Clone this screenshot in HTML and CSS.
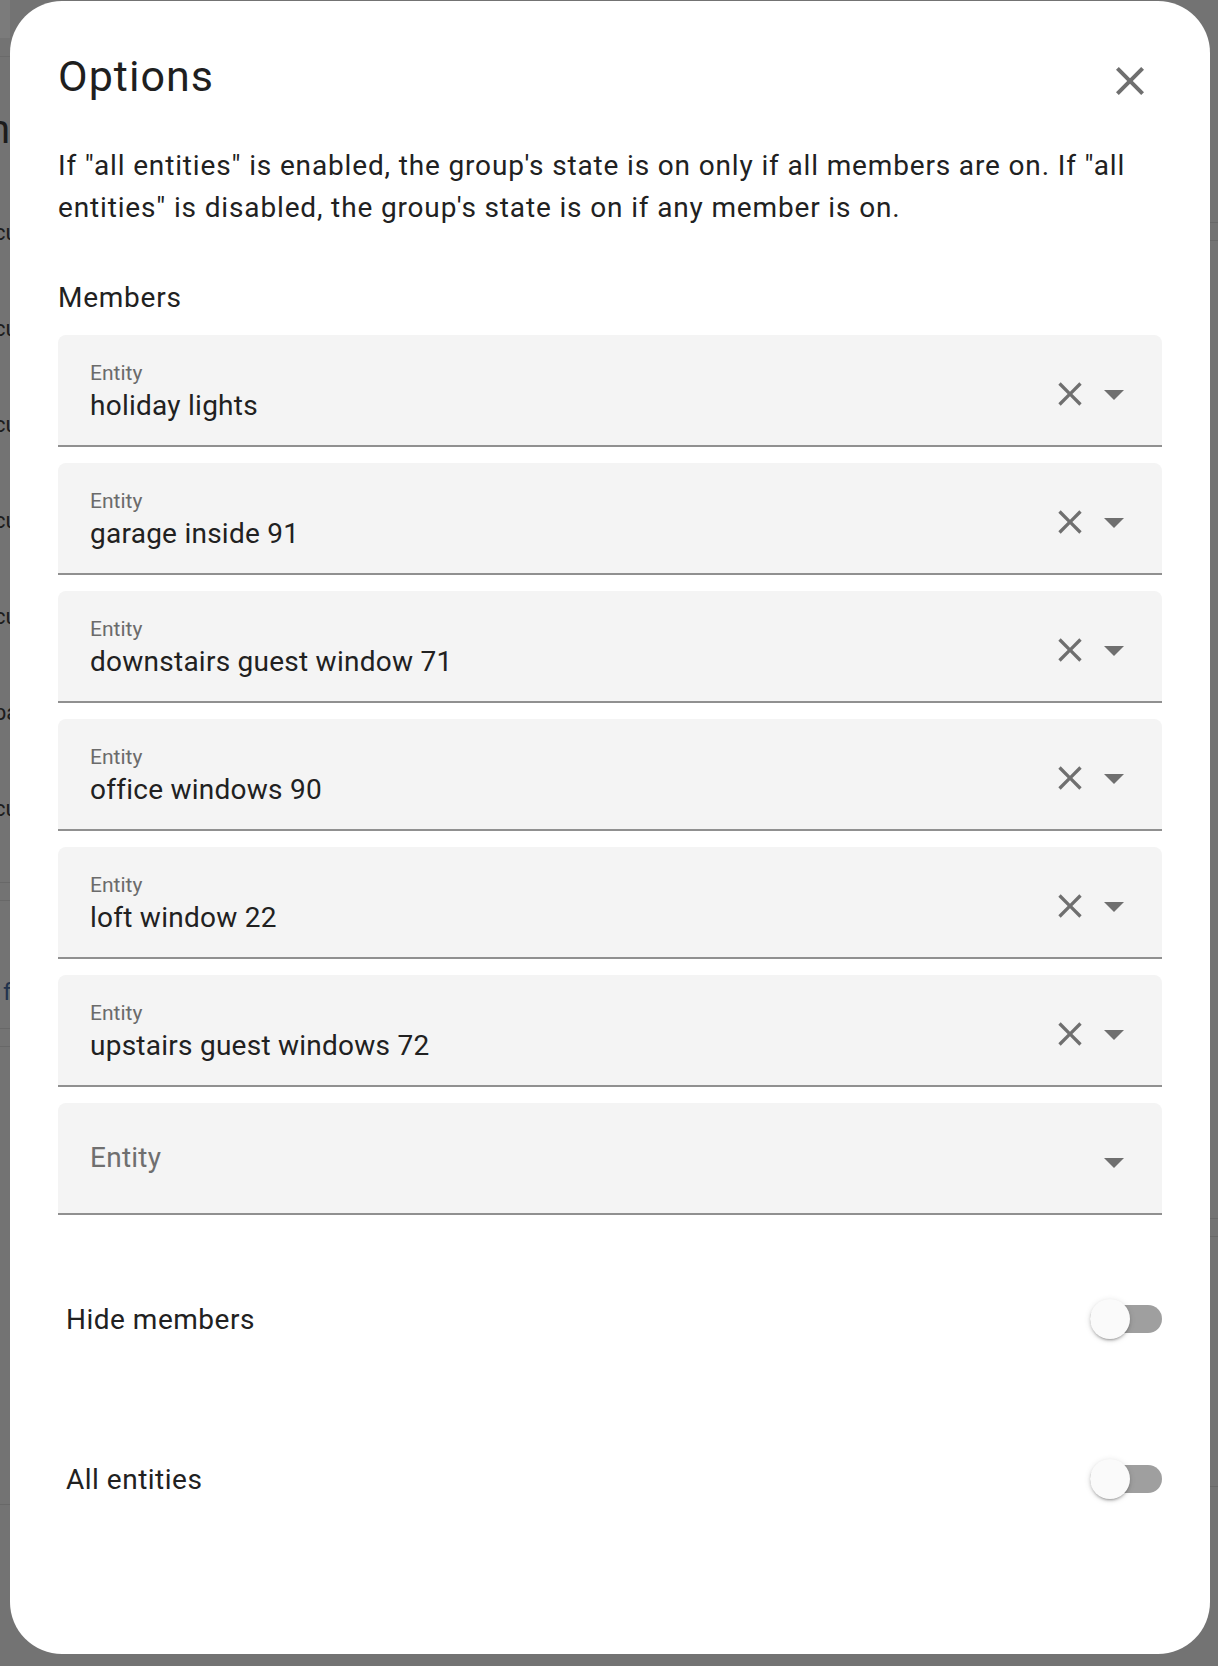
FILE: index.html
```html
<!DOCTYPE html>
<html lang="en">
<head>
<meta charset="utf-8">
<title>Options</title>
<link rel="stylesheet" href="styles.css">
</head>
<body>
<div class="page">
  <div class="page-left">
    <div class="pl-header"></div>
    <div class="pl-band"></div>
    <div class="pl-title"><span>n</span></div>
    <div class="pl-item"><span>cu</span></div>
    <div class="pl-item"><span>cu</span></div>
    <div class="pl-item"><span>cu</span></div>
    <div class="pl-item"><span>cu</span></div>
    <div class="pl-item"><span>cu</span></div>
    <div class="pl-item"><span>pa</span></div>
    <div class="pl-item"><span>cu</span></div>
    <div class="pl-rule pl-rule-a"></div>
    <div class="pl-link"><span>f</span></div>
    <div class="pl-rule"></div>
    <div class="pl-line"></div>
  </div>
  <div class="page-right">
    <div class="pr-rule pr-rule-a"></div>
    <div class="pr-rule pr-rule-b"></div>
    <div class="pr-line"></div>
  </div>
</div>

<div class="dialog" role="dialog" aria-label="Options">
  <header class="dlg-header">
    <h2 class="dlg-title">Options</h2>
    <button class="close-btn" aria-label="Close">
      <svg viewBox="0 0 24 24"><path d="M19,6.41L17.59,5L12,10.59L6.41,5L5,6.41L10.59,12L5,17.59L6.41,19L12,13.41L17.59,19L19,17.59L13.41,12L19,6.41Z"/></svg>
    </button>
  </header>
  <p class="dlg-desc">If "all entities" is enabled, the group's state is on only if all members are on. If "all entities" is disabled, the group's state is on if any member is on.</p>
  <div class="section-label">Members</div>
  <div class="fields">
    <div class="field">
      <div class="field-text"><div class="field-label">Entity</div><div class="field-value">holiday lights</div></div>
      <div class="field-icons">
        <span class="clear-icon"><svg viewBox="0 0 24 24"><path d="M19,6.41L17.59,5L12,10.59L6.41,5L5,6.41L10.59,12L5,17.59L6.41,19L12,13.41L17.59,19L19,17.59L13.41,12L19,6.41Z"/></svg></span>
        <span class="arrow-icon"><svg viewBox="0 0 24 24"><path d="M7,10L12,15L17,10H7Z"/></svg></span>
      </div>
    </div>
    <div class="field">
      <div class="field-text"><div class="field-label">Entity</div><div class="field-value">garage inside 91</div></div>
      <div class="field-icons">
        <span class="clear-icon"><svg viewBox="0 0 24 24"><path d="M19,6.41L17.59,5L12,10.59L6.41,5L5,6.41L10.59,12L5,17.59L6.41,19L12,13.41L17.59,19L19,17.59L13.41,12L19,6.41Z"/></svg></span>
        <span class="arrow-icon"><svg viewBox="0 0 24 24"><path d="M7,10L12,15L17,10H7Z"/></svg></span>
      </div>
    </div>
    <div class="field">
      <div class="field-text"><div class="field-label">Entity</div><div class="field-value">downstairs guest window 71</div></div>
      <div class="field-icons">
        <span class="clear-icon"><svg viewBox="0 0 24 24"><path d="M19,6.41L17.59,5L12,10.59L6.41,5L5,6.41L10.59,12L5,17.59L6.41,19L12,13.41L17.59,19L19,17.59L13.41,12L19,6.41Z"/></svg></span>
        <span class="arrow-icon"><svg viewBox="0 0 24 24"><path d="M7,10L12,15L17,10H7Z"/></svg></span>
      </div>
    </div>
    <div class="field">
      <div class="field-text"><div class="field-label">Entity</div><div class="field-value">office windows 90</div></div>
      <div class="field-icons">
        <span class="clear-icon"><svg viewBox="0 0 24 24"><path d="M19,6.41L17.59,5L12,10.59L6.41,5L5,6.41L10.59,12L5,17.59L6.41,19L12,13.41L17.59,19L19,17.59L13.41,12L19,6.41Z"/></svg></span>
        <span class="arrow-icon"><svg viewBox="0 0 24 24"><path d="M7,10L12,15L17,10H7Z"/></svg></span>
      </div>
    </div>
    <div class="field">
      <div class="field-text"><div class="field-label">Entity</div><div class="field-value">loft window 22</div></div>
      <div class="field-icons">
        <span class="clear-icon"><svg viewBox="0 0 24 24"><path d="M19,6.41L17.59,5L12,10.59L6.41,5L5,6.41L10.59,12L5,17.59L6.41,19L12,13.41L17.59,19L19,17.59L13.41,12L19,6.41Z"/></svg></span>
        <span class="arrow-icon"><svg viewBox="0 0 24 24"><path d="M7,10L12,15L17,10H7Z"/></svg></span>
      </div>
    </div>
    <div class="field">
      <div class="field-text"><div class="field-label">Entity</div><div class="field-value">upstairs guest windows 72</div></div>
      <div class="field-icons">
        <span class="clear-icon"><svg viewBox="0 0 24 24"><path d="M19,6.41L17.59,5L12,10.59L6.41,5L5,6.41L10.59,12L5,17.59L6.41,19L12,13.41L17.59,19L19,17.59L13.41,12L19,6.41Z"/></svg></span>
        <span class="arrow-icon"><svg viewBox="0 0 24 24"><path d="M7,10L12,15L17,10H7Z"/></svg></span>
      </div>
    </div>
    <div class="field field-empty">
      <div class="field-text"><div class="field-placeholder">Entity</div></div>
      <div class="field-icons">
        <span class="arrow-icon"><svg viewBox="0 0 24 24"><path d="M7,10L12,15L17,10H7Z"/></svg></span>
      </div>
    </div>
  </div>
  <div class="rows">
    <div class="row">
      <span class="row-label">Hide members</span>
      <span class="switch"><span class="track"></span><span class="thumb"></span></span>
    </div>
    <div class="row">
      <span class="row-label">All entities</span>
      <span class="switch"><span class="track"></span><span class="thumb"></span></span>
    </div>
  </div>
</div>
</body>
</html>
```

FILE: styles.css
```css
* { box-sizing: border-box; }
html, body { margin: 0; padding: 0; }
body {
  width: 1218px;
  height: 1666px;
  overflow: hidden;
  background: #737373;
  font-family: Roboto, "Liberation Sans", Arial, sans-serif;
  color: #212121;
}

/* ---------- page behind the scrim ---------- */
.page {
  display: flex;
  justify-content: space-between;
  height: 1666px;
}
.page-left {
  width: 10px;
  overflow: hidden;
  color: #1c1c1c;
  white-space: nowrap;
}
.pl-header { height: 38px; background: #7b7b7b; }
.pl-band { height: 19px; border-bottom: 1px solid #6a6a6a; }
.pl-title {
  height: 127px;
  padding-top: 53px;
  font-size: 40px;
  line-height: 40px;
}
.pl-title span { display: inline-block; margin-left: -12px; }
.pl-item {
  height: 96px;
  display: flex;
  align-items: center;
  font-size: 22px;
}
.pl-item span { display: inline-block; margin-left: -6px; }
.pl-rule {
  height: 19px;
  border-top: 1px solid #686868;
  border-bottom: 1px solid #686868;
}
.pl-rule-a { margin-top: 26px; }
.pl-link {
  height: 127px;
  padding-top: 78px;
  font-size: 24px;
  line-height: 26px;
  color: #22334d;
}
.pl-link span { display: inline-block; margin-left: 3px; }
.pl-line { margin-top: 457px; border-top: 1px solid #686868; }

.page-right { width: 8px; }
.pr-rule {
  height: 19px;
  border-top: 1px solid #686868;
  border-bottom: 1px solid #686868;
}
.pr-rule-a { margin-top: 222px; }
.pr-rule-b { margin-top: 977px; }
.pr-line { margin-top: 249px; border-top: 1px solid #686868; }

/* ---------- dialog ---------- */
.dialog {
  position: fixed;
  left: 10px;
  top: 1px;
  width: 1200px;
  height: 1653px;
  background: #ffffff;
  border-radius: 52px;
  padding: 0 48px;
}

.dlg-header {
  display: flex;
  justify-content: space-between;
  align-items: flex-start;
  padding-top: 51px;
}
.dlg-title {
  margin: 0;
  font-size: 43px;
  font-weight: 400;
  line-height: 48px;
  letter-spacing: 1.05px;
  color: #1f1f1f;
}
.close-btn {
  width: 48px;
  height: 48px;
  margin: 5px 8px -5px 0;
  padding: 0;
  border: 0;
  background: transparent;
  display: flex;
}
.close-btn svg { width: 48px; height: 48px; fill: #6f6f6f; }

.dlg-desc {
  margin: 45px 0 0;
  font-size: 28px;
  line-height: 42px;
  letter-spacing: 0.85px;
  color: #212121;
}

.section-label {
  margin-top: 49px;
  font-size: 28px;
  line-height: 40px;
  letter-spacing: 0.75px;
  color: #212121;
}

.fields {
  margin-top: 17px;
  display: flex;
  flex-direction: column;
  gap: 16px;
}
.field {
  height: 112px;
  background: #f4f4f4;
  border-radius: 8px 8px 0 0;
  border-bottom: 2px solid #909090;
  display: flex;
  padding: 0 24px 0 32px;
}
.field-text { flex: 1; padding-top: 26px; }
.field-label {
  font-size: 21px;
  line-height: 24px;
  color: #6b6b6b;
  margin-bottom: 5px;
}
.field-value {
  font-size: 28px;
  line-height: 32px;
  letter-spacing: 0.25px;
  color: #212121;
}
.field-empty .field-text { padding-top: 39px; }
.field-placeholder {
  font-size: 28px;
  line-height: 32px;
  letter-spacing: 0.25px;
  color: #6f6f6f;
}
.field-icons {
  display: flex;
  align-items: center;
  align-self: center;
  margin-top: 8px;
}
.clear-icon { display: flex; width: 40px; height: 40px; }
.clear-icon svg { width: 40px; height: 40px; fill: #6f6f6f; }
.arrow-icon { display: flex; width: 48px; height: 48px; }
.arrow-icon svg { width: 48px; height: 48px; fill: #6f6f6f; }

.rows { margin-top: 25px; }
.row {
  height: 160px;
  display: flex;
  align-items: center;
  justify-content: space-between;
  padding-left: 8px;
}
.row-label {
  font-size: 28px;
  line-height: 40px;
  letter-spacing: 0.5px;
  color: #212121;
}
.switch {
  position: relative;
  width: 72px;
  height: 40px;
  display: flex;
  align-items: center;
  margin-top: -3px;
}
.track {
  width: 72px;
  height: 28px;
  border-radius: 14px;
  background: #9f9f9f;
}
.thumb {
  position: absolute;
  left: 0;
  top: 0;
  width: 40px;
  height: 40px;
  border-radius: 50%;
  background: #fafafa;
  box-shadow: 0 3px 2px -2px rgba(0,0,0,0.2), 0 2px 3px 0 rgba(0,0,0,0.14), 0 1px 6px 0 rgba(0,0,0,0.12);
}
```
